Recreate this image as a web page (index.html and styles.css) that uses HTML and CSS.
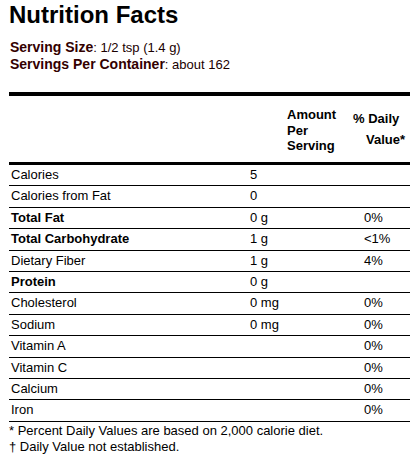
FILE: index.html
```html
<!DOCTYPE html>
<html lang="en">
<head>
    <meta charset="UTF-8">
    <title>Nutrition Facts</title>
    <link rel="stylesheet" href="styles.css">
</head>
<body>

<div class="label">
    <h1 class="label-title">Nutrition Facts</h1>

    <div class="serving">
        <div><span class="serving-name">Serving Size</span>: 1/2 tsp (1.4 g)</div>
        <div><span class="serving-name">Servings Per Container</span>: about 162</div>
    </div>

    <table class="facts">
        <colgroup>
            <col class="col-name">
            <col class="col-amount">
            <col class="col-dv">
        </colgroup>
        <thead>
            <tr>
                <th></th>
                <th class="head-amount">Amount<br>Per<br>Serving</th>
                <th class="head-dv"><span class="dv-top">% Daily</span><span class="dv-bottom">Value*</span></th>
            </tr>
        </thead>
        <tbody>
            <tr><td>Calories</td><td>5</td><td></td></tr>
            <tr><td>Calories from Fat</td><td>0</td><td></td></tr>
            <tr><td class="bold">Total Fat</td><td>0 g</td><td>0%</td></tr>
            <tr><td class="bold">Total Carbohydrate</td><td>1 g</td><td>&lt;1%</td></tr>
            <tr><td>Dietary Fiber</td><td>1 g</td><td>4%</td></tr>
            <tr><td class="bold">Protein</td><td>0 g</td><td></td></tr>
            <tr><td>Cholesterol</td><td>0 mg</td><td>0%</td></tr>
            <tr><td>Sodium</td><td>0 mg</td><td>0%</td></tr>
            <tr><td>Vitamin A</td><td></td><td>0%</td></tr>
            <tr><td>Vitamin C</td><td></td><td>0%</td></tr>
            <tr><td>Calcium</td><td></td><td>0%</td></tr>
            <tr><td>Iron</td><td></td><td>0%</td></tr>
        </tbody>
    </table>

    <div class="notes">
        <div>* Percent Daily Values are based on 2,000 calorie diet.</div>
        <div>&dagger; Daily Value not established.</div>
    </div>
</div>

</body>
</html>
```

FILE: styles.css
```css
/* Page */
body {
    margin: 0;
    background: #fff;
    color: #000;
    font-family: 'Liberation Sans', Arial, sans-serif;
}

.label {
    padding: 0 7px 0 9px;
}

/* Title */
.label-title {
    margin: 0;
    padding-top: 2px;
    font-size: 24px;
    line-height: 26px;
    font-weight: bold;
}

/* Serving info */
.serving {
    margin-top: 11px;
    padding-left: 1px;
    font-size: 13px;
    line-height: 17px;
    color: #1a0000;
}

.serving-name {
    font-size: 14px;
    font-weight: bold;
    color: #330000;
}

/* Facts table */
.facts {
    width: 100%;
    margin-top: 19px;
    table-layout: fixed;
    border-collapse: collapse;
    border-top: 4px solid #000;
    font-size: 13px;
}

.col-name {
    width: 239px;
}

.col-amount {
    width: 113px;
}

.facts thead tr {
    border-bottom: 3px solid #000;
}

.facts th {
    height: 63px;
    padding: 0;
    text-align: left;
    font-size: 13px;
    line-height: 15.5px;
    vertical-align: middle;
    white-space: nowrap;
}

.head-amount {
    padding-left: 39px !important;
    padding-top: 3px !important;
}

.dv-top,
.dv-bottom {
    display: block;
}

.dv-top {
    margin-left: -8px;
    margin-bottom: 6px;
}

.dv-bottom {
    padding-left: 5px;
}

.facts td {
    padding: 3px 2px;
    line-height: 14.4px;
    border-bottom: 1px solid #000;
    white-space: nowrap;
}

.facts td:nth-child(3) {
    padding-left: 3px;
}

.facts td.bold {
    font-weight: bold;
}

/* Footnotes */
.notes {
    margin-top: 1px;
    font-size: 13px;
    line-height: 16px;
}
```
